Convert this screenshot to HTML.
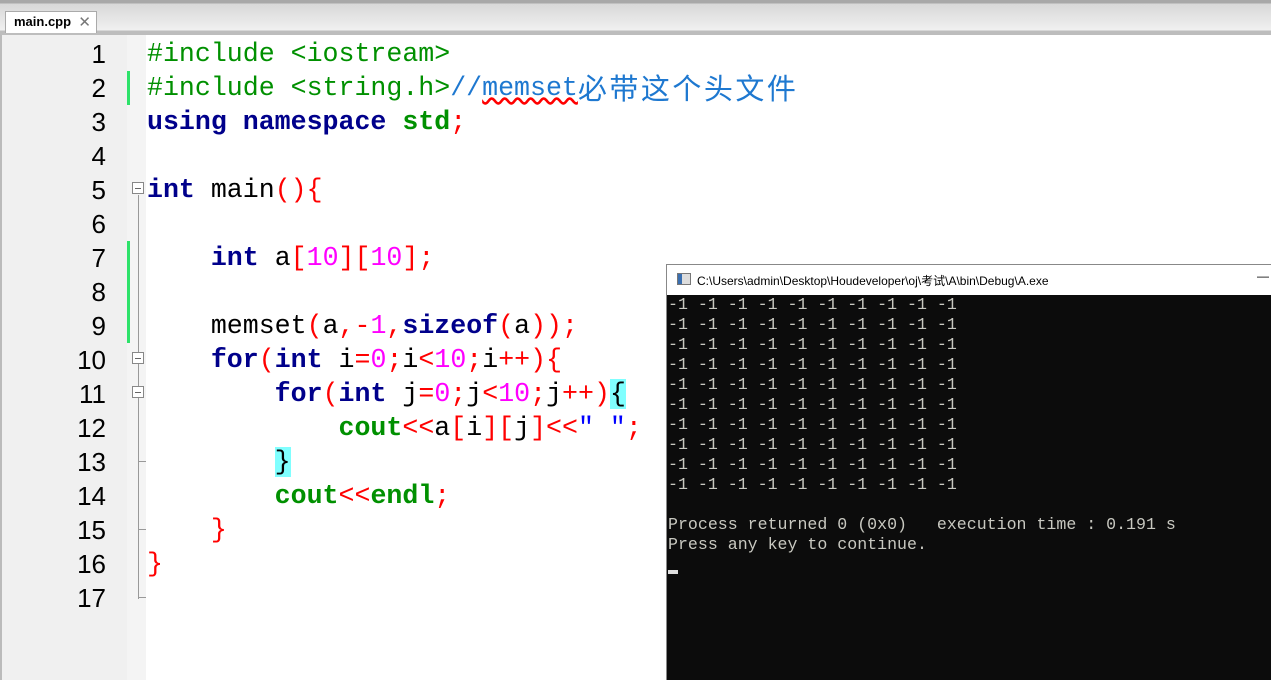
<!DOCTYPE html>
<html><head><meta charset="utf-8"><style>
*{margin:0;padding:0;box-sizing:border-box}
body{width:1271px;height:680px;overflow:hidden;background:#fff;position:relative;font-family:"Liberation Sans",sans-serif}
.top{position:absolute;left:0;top:0;width:1271px;height:35px;background:linear-gradient(#a8a8a8 0,#a8a8a8 3px,#d8d8d8 4px,#f0f0f0 30px,#bdbdbd 31px,#bdbdbd 35px)}
.tab{position:absolute;left:5px;top:11px;width:92px;height:22px;background:#fff;border:1px solid #aaa;border-bottom:none;font-size:13px;font-weight:bold;padding:2px 0 0 8px;color:#000}
.tab span{position:absolute;right:5px;top:1px;font-weight:normal;color:#777;font-size:15px}
.gut{position:absolute;left:0;top:35px;width:127px;height:645px;background:#f0f0f0;border-left:2px solid #bbb}
.fold{position:absolute;left:127px;top:35px;width:19px;height:645px;background:#f4f4f4}
.code{position:absolute;left:0;top:37px;font-family:"Liberation Mono",monospace;font-size:26.6px;line-height:34px;white-space:pre}
.ln{position:absolute;left:0;width:106px;text-align:right;color:#000;font-family:"Liberation Sans",sans-serif;font-size:26px}
.l{position:absolute;left:147px;height:34px}
.k{color:#00008b;font-weight:bold}.g{color:#009000;font-weight:bold}.p{color:#009000}.r{color:#f00}.m{color:#f0f}.b{color:#00f}.c{color:#1e78d0}
.cj{display:inline-block;vertical-align:top;font-family:"Noto Sans CJK SC",sans-serif;font-size:29px;letter-spacing:2.5px;line-height:34px;height:34px;position:relative;top:-1px}
.hl{background:#80ffff}
.bar{position:absolute;left:127px;width:3px;background:#2de26a}
.box{position:absolute;left:132px;width:12px;height:12px;border:1px solid #888;background:#fff}
.box:after{content:"";position:absolute;left:2px;top:5px;width:6px;height:1px;background:#666}
.vl{position:absolute;left:138px;width:1px;background:#999}
.con{position:absolute;left:666px;top:264px;width:605px;height:416px;border-left:1px solid #888;border-top:1px solid #888;background:#0c0c0c}
.tt{height:30px;background:#fff;font-size:12px;color:#000;padding:7px 0 0 30px;position:relative}
.ic{position:absolute;left:10px;top:8px;width:14px;height:12px;border:1px solid #777;background:linear-gradient(90deg,#3a6fb0 0 4px,#ddd 4px)}
.out{font-family:"Liberation Mono",monospace;font-size:16.6px;line-height:20px;color:#c8c8c0;white-space:pre;padding-left:1px}
</style></head><body>
<div class="top"><div class="tab">main.cpp<span>✕</span></div></div>
<div class="gut"></div><div class="fold"></div>
<div class="bar" style="top:71px;height:34px"></div>
<div class="bar" style="top:241px;height:102px"></div>
<div class="box" style="top:182px"></div>
<div class="vl" style="top:195px;height:404px"></div>
<div class="box" style="top:352px"></div>
<div class="box" style="top:386px"></div>
<div class="vl" style="top:461px;width:8px;height:1px"></div>
<div class="vl" style="top:529px;width:8px;height:1px"></div>
<div class="vl" style="top:597px;width:8px;height:1px"></div>
<div class="code">
<div class="ln" style="top:0">1</div><div class="ln" style="top:34px">2</div><div class="ln" style="top:68px">3</div><div class="ln" style="top:102px">4</div><div class="ln" style="top:136px">5</div><div class="ln" style="top:170px">6</div><div class="ln" style="top:204px">7</div><div class="ln" style="top:238px">8</div><div class="ln" style="top:272px">9</div><div class="ln" style="top:306px">10</div><div class="ln" style="top:340px">11</div><div class="ln" style="top:374px">12</div><div class="ln" style="top:408px">13</div><div class="ln" style="top:442px">14</div><div class="ln" style="top:476px">15</div><div class="ln" style="top:510px">16</div><div class="ln" style="top:544px">17</div>
<div class="l" style="top:0"><span class="p">#include &lt;iostream&gt;</span></div>
<div class="l" style="top:34px"><span class="p">#include &lt;string.h&gt;</span><span class="c">//<u style="text-decoration:underline wavy red">memset</u><span class="cj">必带这个头文件</span></span></div>
<div class="l" style="top:68px"><span class="k">using namespace</span> <span class="g">std</span><span class="r">;</span></div>
<div class="l" style="top:136px"><span class="k">int</span> main<span class="r">(){</span></div>
<div class="l" style="top:204px">    <span class="k">int</span> a<span class="r">[</span><span class="m">10</span><span class="r">][</span><span class="m">10</span><span class="r">];</span></div>
<div class="l" style="top:272px">    memset<span class="r">(</span>a<span class="r">,-</span><span class="m">1</span><span class="r">,</span><span class="k">sizeof</span><span class="r">(</span>a<span class="r">));</span></div>
<div class="l" style="top:306px">    <span class="k">for</span><span class="r">(</span><span class="k">int</span> i<span class="r">=</span><span class="m">0</span><span class="r">;</span>i<span class="r">&lt;</span><span class="m">10</span><span class="r">;</span>i<span class="r">++){</span></div>
<div class="l" style="top:340px">        <span class="k">for</span><span class="r">(</span><span class="k">int</span> j<span class="r">=</span><span class="m">0</span><span class="r">;</span>j<span class="r">&lt;</span><span class="m">10</span><span class="r">;</span>j<span class="r">++)</span><span class="hl">{</span></div>
<div class="l" style="top:374px">            <span class="g">cout</span><span class="r">&lt;&lt;</span>a<span class="r">[</span>i<span class="r">][</span>j<span class="r">]&lt;&lt;</span><span class="b">" "</span><span class="r">;</span></div>
<div class="l" style="top:408px">        <span class="hl">}</span></div>
<div class="l" style="top:442px">        <span class="g">cout</span><span class="r">&lt;&lt;</span><span class="g">endl</span><span class="r">;</span></div>
<div class="l" style="top:476px">    <span class="r">}</span></div>
<div class="l" style="top:510px"><span class="r">}</span></div>
</div>
<div class="con"><div class="tt"><div class="ic"></div><span style="font-family:'Liberation Sans','Noto Sans CJK SC',sans-serif">C:\Users\admin\Desktop\Houdeveloper\oj\考试\A\bin\Debug\A.exe</span><span style="position:absolute;right:2px;top:4px">—</span></div>
<div class="out">-1 -1 -1 -1 -1 -1 -1 -1 -1 -1
-1 -1 -1 -1 -1 -1 -1 -1 -1 -1
-1 -1 -1 -1 -1 -1 -1 -1 -1 -1
-1 -1 -1 -1 -1 -1 -1 -1 -1 -1
-1 -1 -1 -1 -1 -1 -1 -1 -1 -1
-1 -1 -1 -1 -1 -1 -1 -1 -1 -1
-1 -1 -1 -1 -1 -1 -1 -1 -1 -1
-1 -1 -1 -1 -1 -1 -1 -1 -1 -1
-1 -1 -1 -1 -1 -1 -1 -1 -1 -1
-1 -1 -1 -1 -1 -1 -1 -1 -1 -1

Process returned 0 (0x0)   execution time : 0.191 s
Press any key to continue.</div>
<div style="position:absolute;left:1px;top:305px;width:10px;height:4px;background:#e0e0e0"></div>
</div>
</body></html>
